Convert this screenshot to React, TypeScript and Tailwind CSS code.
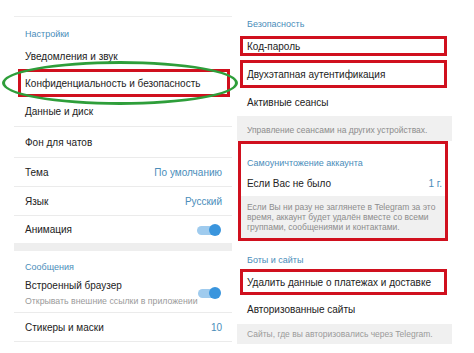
const blue = 'text-[#4a8dba]'

function Row({ label, value, toggle, sub, className = '' }: { label: string; value?: string; toggle?: boolean; sub?: string; className?: string }) {
  return (
    <div className={`flex items-center justify-between whitespace-nowrap pl-[11px] pr-[10px] ${className}`}>
      <div className="flex flex-col">
        <span className="text-[10px] text-[#222]">{label}</span>
        {sub ? <span className="mt-[2px] text-[8.75px] text-[#9a9a9a]">{sub}</span> : null}
      </div>
      {value ? <span className={`text-[10px] ${blue}`}>{value}</span> : null}
      {toggle ? <Toggle /> : null}
    </div>
  )
}

function Toggle() {
  return (
    <div className="relative mr-[1px] h-[12px] w-[24px]">
      <div className="absolute left-0 top-[2px] h-[9px] w-[20px] rounded-full bg-[#9fcbee]" />
      <div className="absolute right-0 top-0 h-[12px] w-[12px] rounded-full bg-[#3a95dd]" />
    </div>
  )
}

function Sep() {
  return <div className="h-px bg-[#ebebeb]" />
}

function RedBox({ children, className = '' }: { children: React.ReactNode; className?: string }) {
  return <div className={`whitespace-nowrap border-[3px] border-[#d0101e] ${className}`}>{children}</div>
}

export default function App() {
  return (
    <div className="relative flex h-[353px] w-[474px] overflow-hidden bg-white" style={{ fontFamily: '"Liberation Sans", Arial, sans-serif' }}>
      {/* left: settings */}
      <div className="ml-[14px] flex w-[218px] flex-col">
        <div className="mt-[16px] h-px bg-[#ededed]" />
        <div className={`pl-[11px] pt-[11px] text-[9px] leading-[13px] ${blue}`}>Настройки</div>
        <Row label="Уведомления и звук" className="h-[24px] pt-[6px]" />
        <RedBox className="ml-[4px] mr-[2px] mt-[4px] flex h-[28px] items-center pl-[4px]">
          <span className="text-[10px] text-[#222]">Конфиденциальность и безопасность</span>
        </RedBox>
        <Row label="Данные и диск" className="h-[29px]" />
        <Sep />
        <Row label="Фон для чатов" className="h-[30px]" />
        <Sep />
        <Row label="Тема" value="По умолчанию" className="h-[28px]" />
        <Sep />
        <Row label="Язык" value="Русский" className="h-[28px]" />
        <Sep />
        <Row label="Анимация" toggle className="h-[27px]" />
        <div className="h-[8px] bg-[#eeeeee]" />
        <div className={`pl-[11px] pt-[10px] text-[9px] leading-[13px] ${blue}`}>Сообщения</div>
        <Row label="Встроенный браузер" sub="Открывать внешние ссылки в приложении" toggle className="h-[38px]" />
        <Sep />
        <Row label="Стикеры и маски" value="10" className="h-[28px]" />
        <div className="h-px bg-[#ebebeb]" />
      </div>

      {/* right: privacy */}
      <div className="ml-[5px] flex w-[215px] flex-col">
        <div className={`pl-[10px] pt-[18px] text-[9px] leading-[13px] ${blue}`}>Безопасность</div>
        <RedBox className="ml-[3px] mr-[5px] mt-[5px] flex h-[20px] items-center pl-[4px]">
          <span className="text-[10px] text-[#222]">Код-пароль</span>
        </RedBox>
        <RedBox className="ml-[3px] mr-[5px] mt-[4px] flex h-[28px] items-center pl-[4px]">
          <span className="text-[10px] text-[#222]">Двухэтапная аутентификация</span>
        </RedBox>
        <div className="flex h-[28px] items-center whitespace-nowrap pl-[10px] text-[10px] text-[#222]">Активные сеансы</div>
        <div className="flex h-[25px] items-end whitespace-nowrap bg-[#f0f0f0] pb-[4px] pl-[10px] text-[8.5px] text-[#8c8c8c]">
          Управление сеансами на других устройствах.
        </div>
        <RedBox className="ml-[1px] mr-[4px] flex h-[100px] flex-col">
          <div className={`pl-[6px] pt-[13px] text-[9px] leading-[13px] ${blue}`}>Самоуничтожение аккаунта</div>
          <div className="flex h-[26px] items-center justify-between pl-[6px] pr-[3px]">
            <span className="text-[10px] text-[#222]">Если Вас не было</span>
            <span className={`text-[10px] ${blue}`}>1 г.</span>
          </div>
          <div className="flex-1 whitespace-normal bg-[#f0f0f0] pl-[6px] pr-[4px] pt-[6px] text-[8.5px] leading-[10px] text-[#8c8c8c]">
            Если Вы ни разу не заглянете в Telegram за это время, аккаунт будет удалён вместе со всеми группами, сообщениями и контактами.
          </div>
        </RedBox>
        <div className={`pl-[10px] pt-[13px] text-[9px] leading-[13px] ${blue}`}>Боты и сайты</div>
        <RedBox className="ml-[3px] mr-[5px] mt-[2px] flex h-[26px] items-center pl-[4px]">
          <span className="text-[10px] text-[#222]">Удалить данные о платежах и доставке</span>
        </RedBox>
        <div className="flex h-[29px] items-center whitespace-nowrap pl-[10px] text-[10px] text-[#222]">Авторизованные сайты</div>
        <div className="flex h-[20px] items-center whitespace-nowrap bg-[#f0f0f0] pl-[10px] text-[8.5px] text-[#9a9a9a]">
          Сайты, где вы авторизовались через Telegram.
        </div>
      </div>

      {/* green ellipse annotation */}
      <div className="pointer-events-none absolute left-[2px] top-[61px] h-[44px] w-[236px] rounded-[50%] border-[3px] border-[#2e9e3a]" />
    </div>
  )
}
